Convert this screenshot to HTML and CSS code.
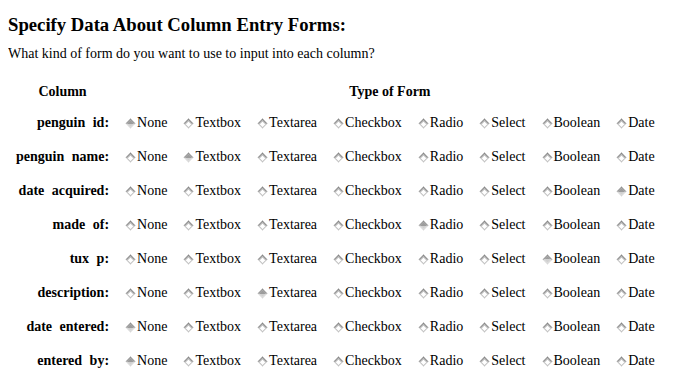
FILE: index.html
```html
<!DOCTYPE html>
<html lang="en">
<head>
  <meta charset="UTF-8" />
  <title>Column Entry Forms</title>
  <link rel="stylesheet" href="styles.css">
</head>
<body>
  <h3>Specify Data About Column Entry Forms:</h3>
  <p>What kind of form do you want to use to input into each column?</p>

  <form>
    <table class="forms">
      <tr>
        <th class="col-head">Column</th>
        <th colspan="8">Type of Form</th>
      </tr>
      <tr>
        <th class="label">penguin id:</th>
        <td><label><input type="radio" name="penguin_id" value="none" checked>None</label></td>
        <td><label><input type="radio" name="penguin_id" value="textbox">Textbox</label></td>
        <td><label><input type="radio" name="penguin_id" value="textarea">Textarea</label></td>
        <td><label><input type="radio" name="penguin_id" value="checkbox">Checkbox</label></td>
        <td><label><input type="radio" name="penguin_id" value="radio">Radio</label></td>
        <td><label><input type="radio" name="penguin_id" value="select">Select</label></td>
        <td><label><input type="radio" name="penguin_id" value="boolean">Boolean</label></td>
        <td><label><input type="radio" name="penguin_id" value="date">Date</label></td>
      </tr>
      <tr>
        <th class="label">penguin name:</th>
        <td><label><input type="radio" name="penguin_name" value="none">None</label></td>
        <td><label><input type="radio" name="penguin_name" value="textbox" checked>Textbox</label></td>
        <td><label><input type="radio" name="penguin_name" value="textarea">Textarea</label></td>
        <td><label><input type="radio" name="penguin_name" value="checkbox">Checkbox</label></td>
        <td><label><input type="radio" name="penguin_name" value="radio">Radio</label></td>
        <td><label><input type="radio" name="penguin_name" value="select">Select</label></td>
        <td><label><input type="radio" name="penguin_name" value="boolean">Boolean</label></td>
        <td><label><input type="radio" name="penguin_name" value="date">Date</label></td>
      </tr>
      <tr>
        <th class="label">date acquired:</th>
        <td><label><input type="radio" name="date_acquired" value="none">None</label></td>
        <td><label><input type="radio" name="date_acquired" value="textbox">Textbox</label></td>
        <td><label><input type="radio" name="date_acquired" value="textarea">Textarea</label></td>
        <td><label><input type="radio" name="date_acquired" value="checkbox">Checkbox</label></td>
        <td><label><input type="radio" name="date_acquired" value="radio">Radio</label></td>
        <td><label><input type="radio" name="date_acquired" value="select">Select</label></td>
        <td><label><input type="radio" name="date_acquired" value="boolean">Boolean</label></td>
        <td><label><input type="radio" name="date_acquired" value="date" checked>Date</label></td>
      </tr>
      <tr>
        <th class="label">made of:</th>
        <td><label><input type="radio" name="made_of" value="none">None</label></td>
        <td><label><input type="radio" name="made_of" value="textbox">Textbox</label></td>
        <td><label><input type="radio" name="made_of" value="textarea">Textarea</label></td>
        <td><label><input type="radio" name="made_of" value="checkbox">Checkbox</label></td>
        <td><label><input type="radio" name="made_of" value="radio" checked>Radio</label></td>
        <td><label><input type="radio" name="made_of" value="select">Select</label></td>
        <td><label><input type="radio" name="made_of" value="boolean">Boolean</label></td>
        <td><label><input type="radio" name="made_of" value="date">Date</label></td>
      </tr>
      <tr>
        <th class="label">tux p:</th>
        <td><label><input type="radio" name="tux_p" value="none">None</label></td>
        <td><label><input type="radio" name="tux_p" value="textbox">Textbox</label></td>
        <td><label><input type="radio" name="tux_p" value="textarea">Textarea</label></td>
        <td><label><input type="radio" name="tux_p" value="checkbox">Checkbox</label></td>
        <td><label><input type="radio" name="tux_p" value="radio">Radio</label></td>
        <td><label><input type="radio" name="tux_p" value="select">Select</label></td>
        <td><label><input type="radio" name="tux_p" value="boolean" checked>Boolean</label></td>
        <td><label><input type="radio" name="tux_p" value="date">Date</label></td>
      </tr>
      <tr>
        <th class="label">description:</th>
        <td><label><input type="radio" name="description" value="none">None</label></td>
        <td><label><input type="radio" name="description" value="textbox">Textbox</label></td>
        <td><label><input type="radio" name="description" value="textarea" checked>Textarea</label></td>
        <td><label><input type="radio" name="description" value="checkbox">Checkbox</label></td>
        <td><label><input type="radio" name="description" value="radio">Radio</label></td>
        <td><label><input type="radio" name="description" value="select">Select</label></td>
        <td><label><input type="radio" name="description" value="boolean">Boolean</label></td>
        <td><label><input type="radio" name="description" value="date">Date</label></td>
      </tr>
      <tr>
        <th class="label">date entered:</th>
        <td><label><input type="radio" name="date_entered" value="none" checked>None</label></td>
        <td><label><input type="radio" name="date_entered" value="textbox">Textbox</label></td>
        <td><label><input type="radio" name="date_entered" value="textarea">Textarea</label></td>
        <td><label><input type="radio" name="date_entered" value="checkbox">Checkbox</label></td>
        <td><label><input type="radio" name="date_entered" value="radio">Radio</label></td>
        <td><label><input type="radio" name="date_entered" value="select">Select</label></td>
        <td><label><input type="radio" name="date_entered" value="boolean">Boolean</label></td>
        <td><label><input type="radio" name="date_entered" value="date">Date</label></td>
      </tr>
      <tr>
        <th class="label">entered by:</th>
        <td><label><input type="radio" name="entered_by" value="none" checked>None</label></td>
        <td><label><input type="radio" name="entered_by" value="textbox">Textbox</label></td>
        <td><label><input type="radio" name="entered_by" value="textarea">Textarea</label></td>
        <td><label><input type="radio" name="entered_by" value="checkbox">Checkbox</label></td>
        <td><label><input type="radio" name="entered_by" value="radio">Radio</label></td>
        <td><label><input type="radio" name="entered_by" value="select">Select</label></td>
        <td><label><input type="radio" name="entered_by" value="boolean">Boolean</label></td>
        <td><label><input type="radio" name="entered_by" value="date">Date</label></td>
      </tr>
    </table>
  </form>
</body>
</html>
```

FILE: styles.css
```css
body {
  margin: 8px;
  font-family: "Liberation Serif", "Times New Roman", serif;
  font-size: 14px;
  color: #000;
  background: #fff;
}

h3 {
  font-size: 18.7px;
  margin: 6px 0 10px;
}

p {
  margin: 0 0 22px;
  font-size: 14px;
}

form {
  margin: 0;
}

.forms {
  border-collapse: separate;
  border-spacing: 0;
  line-height: 16px;
}

.forms th {
  font-size: 14px;
  padding: 0 8px 6px;
}

.forms .col-head {
  width: 93px;
}

.forms .label {
  text-align: right;
  word-spacing: 4px;
  padding: 9px 8px;
  white-space: nowrap;
}

.forms td {
  padding: 9px 8px;
  white-space: nowrap;
}

.forms label {
  display: flex;
  align-items: center;
  height: 16px;
}

.forms input[type="radio"] {
  appearance: none;
  -webkit-appearance: none;
  box-sizing: border-box;
  flex: none;
  width: 7px;
  height: 7px;
  margin: 0 3px 0 2px;
  border: 1px solid;
  border-color: #858585 #c2c2c2 #c2c2c2 #858585;
  box-shadow: inset 1px 1px 0 #b8b8b8;
  background: #fff;
  transform: rotate(45deg);
}

.forms input[type="radio"]:checked {
  border-color: #8e8e8e #d6d6d6 #d6d6d6 #8e8e8e;
  box-shadow: none;
  background: linear-gradient(to bottom right, #9c9c9c 50%, #d0d0d0 50%);
}
```
